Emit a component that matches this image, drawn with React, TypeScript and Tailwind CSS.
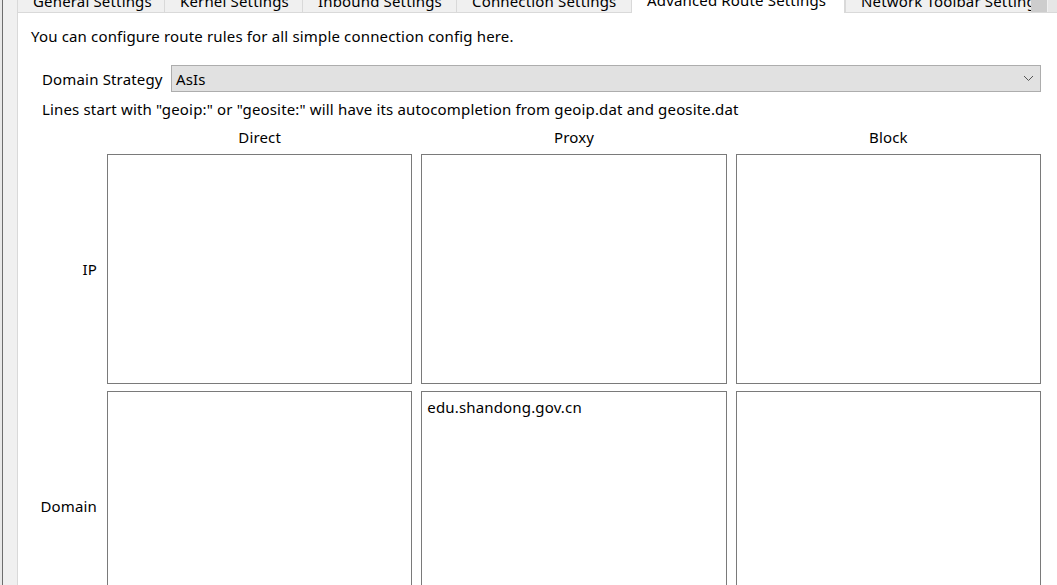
import React from 'react';

const tabs = [
  { label: 'General Settings', width: 147 },
  { label: 'Kernel Settings', width: 138 },
  { label: 'Inbound Settings', width: 154 },
  { label: 'Connection Settings', width: 175 },
  { label: 'Advanced Route Settings', width: 214, active: true },
  { label: 'Network Toolbar Settings', width: 186 },
];

const columns = ['Direct', 'Proxy', 'Block'];

const rows = [
  { label: 'IP', values: ['', '', ''] },
  { label: 'Domain', values: ['', 'edu.shandong.gov.cn', ''] },
];

const RuleBox: React.FC<{ value: string }> = ({ value }) => (
  <div className="h-[230px] border border-[#7a7a7a] bg-white px-[5px] py-[5px] leading-[20px]">{value}</div>
);

export default function App() {
  return (
    <div
      className="flex h-[585px] w-[1057px] overflow-hidden bg-[#f0f0f0] text-[15px] tracking-[0.16px] text-black"
      style={{ fontFamily: '"Noto Sans", "Segoe UI", sans-serif' }}
    >
      {/* window edge behind the dialog */}
      <div className="w-[2px] shrink-0 bg-[#e8e8e8]" />
      <div className="w-[1px] shrink-0 bg-[#6d6d6d]" />
      <div className="w-[14px] shrink-0 bg-[#f0f0f0]" />

      <div className="flex min-w-0 flex-1 flex-col">
        {/* tab strip, scrolled up past the top edge */}
        <div className="-mt-[10px] flex h-[23px] shrink-0 items-end">
          {tabs.map((t) =>
            t.active ? (
              <div
                key={t.label}
                style={{ width: t.width }}
                className="relative z-10 flex h-[23px] shrink-0 items-start whitespace-nowrap border-x border-t border-[#d9d9d9] bg-white pl-[15px] leading-[18px]"
              >
                {t.label}
              </div>
            ) : (
              <div
                key={t.label}
                style={{ width: t.width }}
                className="flex h-[21px] shrink-0 items-start overflow-hidden whitespace-nowrap border-b border-l border-[#d9d9d9] bg-[#f0f0f0] pl-[15px] leading-[19px]"
              >
                {t.label}
              </div>
            )
          )}
          <div className="flex h-[23px] flex-1 items-stretch border-b border-[#d9d9d9]">
            <div className="w-[17px] border-r border-[#f0f0f0] bg-[#cdcdcd]" />
            <div className="flex-1 bg-[#e6e6e6]" />
          </div>
        </div>

        {/* page body */}
        <div className="flex-1 border-l border-[#d9d9d9] bg-white pl-[13px] pr-[16px]">
          <div className="mt-[13px] leading-[20px]">You can configure route rules for all simple connection config here.</div>

          <div className="mt-[19px] flex items-center pl-[11px]">
            <span className="w-[129px] shrink-0 leading-[20px]">Domain Strategy</span>
            <div className="flex h-[27px] flex-1 items-center justify-between border border-[#adadad] bg-[#e1e1e1] pl-[4px] pr-[6px]">
              <span className="leading-[20px]">AsIs</span>
              <svg width="11" height="7" viewBox="0 0 11 7" className="text-[#555]">
                <path d="M1 1 L5.5 5.5 L10 1" fill="none" stroke="currentColor" strokeWidth="1" />
              </svg>
            </div>
          </div>

          <div className="mt-[7px] pl-[11px] leading-[20px]">
            Lines start with "geoip:" or "geosite:" will have its autocompletion from geoip.dat and geosite.dat
          </div>

          <div className="mt-[8px] grid grid-cols-[56px_1fr_1fr_1fr] gap-x-[9px] gap-y-[7px] pl-[11px]">
            <div />
            {columns.map((c) => (
              <div key={c} className="text-center leading-[20px]">
                {c}
              </div>
            ))}
            {rows.map((r) => (
              <React.Fragment key={r.label}>
                <div className="flex items-center justify-end pr-[1px]">{r.label}</div>
                {r.values.map((v, i) => (
                  <RuleBox key={i} value={v} />
                ))}
              </React.Fragment>
            ))}
          </div>
        </div>
      </div>
    </div>
  );
}
